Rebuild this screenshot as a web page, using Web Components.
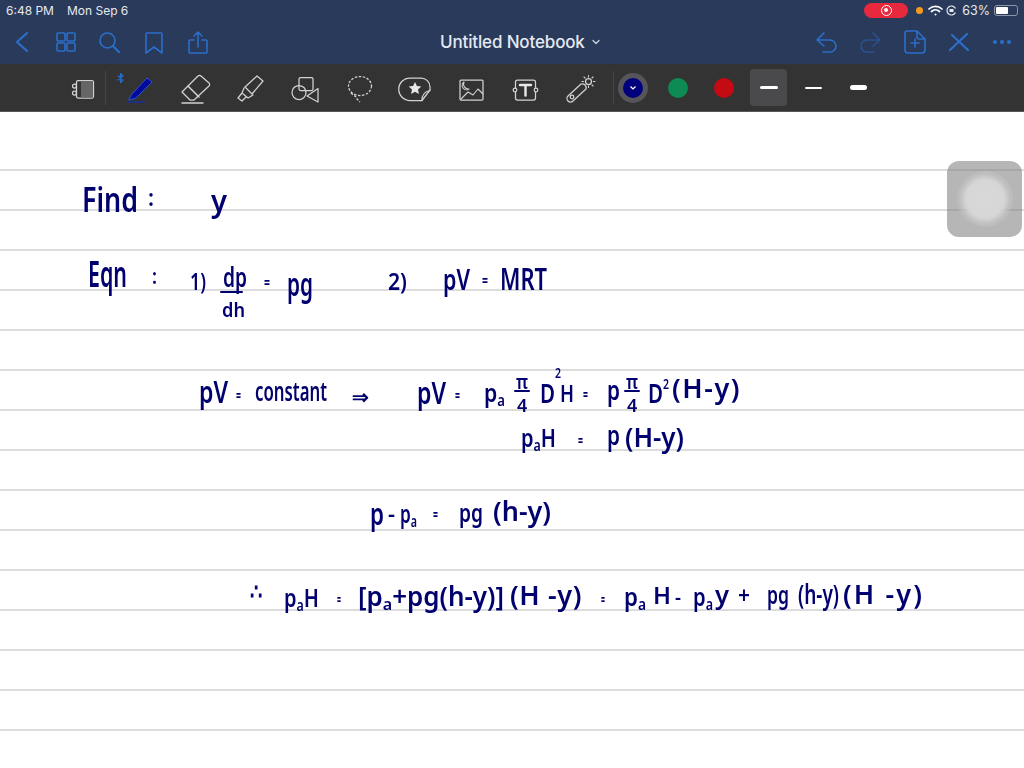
<!DOCTYPE html>
<html>
<head>
<meta charset="utf-8">
<title>Untitled Notebook</title>
<style>
  html, body { margin: 0; height: 100%; }
  body { width: 1024px; height: 768px; overflow: hidden; display: flex; flex-direction: column; font-family: Inter, "Noto Sans", sans-serif; }
</style>
</head>
<body>
<status-bar></status-bar>
<nav-bar></nav-bar>
<tool-bar></tool-bar>
<note-paper>
  <ink-text x="82" y="212" w="56" s="34">Find</ink-text>
  <ink-text x="148" y="206" w="6" s="24">:</ink-text>
  <ink-text x="211" y="212" w="16" s="30">y</ink-text>

  <ink-text x="88" y="287" w="39" s="36">Eqn</ink-text>
  <ink-text x="152" y="284" w="5" s="22">:</ink-text>
  <ink-text x="190" y="290" w="16" s="24">1)</ink-text>
  <ink-text x="223" y="287" w="24" s="27">dp</ink-text>
  <ink-bar x="220" y="291" w="23"></ink-bar>
  <ink-text x="222" y="317" w="23" s="20">dh</ink-text>
  <ink-text x="264" y="289" w="6" s="17">=</ink-text>
  <ink-text x="287" y="296" w="26" s="32">pg</ink-text>
  <ink-text x="388" y="290" w="19" s="24">2)</ink-text>
  <ink-text x="443" y="290" w="27" s="28">pV</ink-text>
  <ink-text x="482" y="287" w="6" s="17">=</ink-text>
  <ink-text x="500" y="290" w="47" s="30">MRT</ink-text>

  <ink-text x="199" y="403" w="29" s="30">pV</ink-text>
  <ink-text x="236" y="402" w="5" s="17">=</ink-text>
  <ink-text x="255" y="401" w="72" s="27">constant</ink-text>
  <ink-text x="352" y="404" w="21" s="20">⇒</ink-text>
  <ink-text x="417" y="404" w="29" s="30">pV</ink-text>
  <ink-text x="455" y="402" w="5" s="17">=</ink-text>
  <ink-text x="484" y="402" w="21" s="25">p<sub>a</sub></ink-text>
  <ink-text x="516" y="389" w="12" s="20">π</ink-text>
  <ink-bar x="514" y="390" w="16"></ink-bar>
  <ink-text x="517" y="412" w="11" s="18">4</ink-text>
  <ink-text x="540" y="403" w="15" s="27">D</ink-text>
  <ink-text x="555" y="378" w="6" s="15">2</ink-text>
  <ink-text x="560" y="402" w="14" s="24">H</ink-text>
  <ink-text x="583" y="401" w="5" s="17">=</ink-text>
  <ink-text x="607" y="400" w="13" s="27">p</ink-text>
  <ink-text x="626" y="389" w="12" s="20">π</ink-text>
  <ink-bar x="624" y="390" w="16"></ink-bar>
  <ink-text x="627" y="412" w="11" s="18">4</ink-text>
  <ink-text x="648" y="403" w="15" s="27">D</ink-text>
  <ink-text x="663" y="389" w="6" s="15">2</ink-text>
  <ink-text x="672" y="398" w="69" s="27">(H-y)</ink-text>

  <ink-text x="521" y="447" w="35" s="26">p<sub>a</sub>H</ink-text>
  <ink-text x="578" y="447" w="5" s="17">=</ink-text>
  <ink-text x="607" y="445" w="13" s="27">p</ink-text>
  <ink-text x="625" y="447" w="59" s="27">(H-y)</ink-text>

  <ink-text x="370" y="525" w="14" s="30">p</ink-text>
  <ink-text x="388" y="522" w="7" s="22">-</ink-text>
  <ink-text x="400" y="523" w="17" s="26">p<sub>a</sub></ink-text>
  <ink-text x="433" y="521" w="5" s="17">=</ink-text>
  <ink-text x="459" y="522" w="24" s="26">pg</ink-text>
  <ink-text x="493" y="521" w="58" s="27">(h-y)</ink-text>

  <ink-text x="250" y="599" w="12" s="21">∴</ink-text>
  <ink-text x="284" y="607" w="35" s="26">p<sub>a</sub>H</ink-text>
  <ink-text x="337" y="606" w="4" s="17">=</ink-text>
  <ink-text x="358" y="606" w="146" s="27">[p<sub>a</sub>+pg(h-y)]</ink-text>
  <ink-text x="510" y="605" w="72" s="27">(H -y)</ink-text>
  <ink-text x="601" y="606" w="4" s="17">=</ink-text>
  <ink-text x="624" y="606" w="22" s="26">p<sub>a</sub></ink-text>
  <ink-text x="653" y="604" w="18" s="24">H</ink-text>
  <ink-text x="675" y="604" w="6" s="20">-</ink-text>
  <ink-text x="693" y="606" w="20" s="26">p<sub>a</sub></ink-text>
  <ink-text x="715" y="604" w="14" s="26">y</ink-text>
  <ink-text x="738" y="604" w="12" s="24">+</ink-text>
  <ink-text x="767" y="604" w="22" s="26">pg</ink-text>
  <ink-text x="798" y="604" w="41" s="27">(h-y)</ink-text>
  <ink-text x="843" y="604" w="81" s="27">(H -y)</ink-text>

  <float-button></float-button>
</note-paper>

<script>
const ICONS = {
  back: '<path d="M13 6 3 15l10 9" stroke-width="2.2"/>',
  grid: '<rect x="6" y="6" width="8" height="8" rx="1"/><rect x="16" y="6" width="8" height="8" rx="1"/><rect x="6" y="16" width="8" height="8" rx="1"/><rect x="16" y="16" width="8" height="8" rx="1"/>',
  search: '<circle cx="12.500" cy="13.500" r="7.500"/><path d="m18 19 6 6" stroke-width="2.2"/>',
  bookmark: '<path d="M8 6h14a1 1 0 0 1 1 1v19l-8-6-8 6V7a1 1 0 0 1 1-1z"/>',
  share: '<path d="M11 13H7a1 1 0 0 0-1 1v11a1 1 0 0 0 1 1h16a1 1 0 0 0 1-1V14a1 1 0 0 0-1-1h-4M15 20V5M11 9l4-4 4 4"/>',
  undo: '<path d="M6 13h13a6 6 0 0 1 0 12h-7M13 6l-7 7 7 6"/>',
  redo: '<path d="M25 13H12a6 6 0 0 0 0 12h7M18 6l7 7-7 6"/>',
  addpage: '<path d="M8 4h10l8 8v11a3 3 0 0 1-3 3H9a3 3 0 0 1-3-3V6a2 2 0 0 1 2-2zM18 4v6a2 2 0 0 0 2 2h6M16 12v8M12 16h8"/>',
  cross: '<path d="M7 23 24 7M9 8l16 15" stroke-width="2.200"/>',
  notebook: '<rect x="8.500" y="7.500" width="17" height="17.500" rx="1.500"/><path d="M13 8h12v16.500H13z" fill="#666" stroke="none"/><circle cx="6.500" cy="13" r="2"/><circle cx="6.500" cy="20" r="2"/>',
  pen: '<path d="M7 21 22 5l5 4-16 16-7 2z" fill="#000a9a" stroke="#2b55c8" stroke-width="1"/><path d="M3 29h16" stroke="#1a2fa0" stroke-width="1.500"/><path d="m-7 3 5 4-2.500 2.500V.5L-2 3l-5 4" stroke="#2a6fc9" stroke-width="1.200"/>',
  eraser: '<path d="M2 19 18 3a2 2 0 0 1 3 0l8 7a2 2 0 0 1 0 3L14 27h-4z"/><path d="m8 13 11 11M2 30h21" stroke-width="1.500"/>',
  highlighter: '<path d="m10 14 12-11 6 5-11 13zM9 15l-2 5 6 5 5-3M7 20l-4 5 4 3 4-4"/>',
  shapes: '<rect x="9" y="4.500" width="14" height="13" rx="1.500"/><circle cx="9" cy="19.500" r="7"/><path d="m28 15.500-11 7.500 11 6z"/>',
  lasso: '<g stroke-linecap="butt" stroke-dasharray="2.500 1.500"><ellipse cx="15" cy="13" rx="11.500" ry="9.500"/><path d="M6 20c2 3 6 3 6 6l3 3"/></g>',
  sticker: '<path d="M10 5h11a9 9 0 0 1 9 9v3l-8 10.500H10a11 11 0 0 1 0-22.500z"/><path d="M22 27.500c0-5 2-9 8-10"/><path d="m15 9 1.900 4.100 4.400.5-3.300 3 .9 4.400-3.900-2.200-3.900 2.200.9-4.400-3.300-3 4.400-.5z" fill="#e8e8e8" stroke="none"/>',
  image: '<rect x="5" y="7" width="23" height="20" rx="1"/><path d="m6 26 7-7 5 3 5-6 5 5M9 9a5 5 0 0 0 5 7 4 4 0 0 1-5-7z" stroke-width="1.100"/>',
  text: '<rect x="5.500" y="7" width="20" height="20" rx="2"/><circle cx="5" cy="17" r="1.800" fill="#333"/><circle cx="26" cy="17" r="1.800" fill="#333"/><path d="M10 12h11M15.500 12v10.500" stroke="#e8e8e8" stroke-width="2.400"/>',
  laser: '<path d="m3 23 13-12a4 4 0 0 1 5 5L8 28a3.500 3.500 0 0 1-5-5z"/><circle cx="7" cy="24" r="1.800"/><circle cx="23.500" cy="8.500" r="3"/><path d="M23.500 2.500v1.500M23.500 13v1.500M17 8.500h1.500M28.500 8.500h1.500M19 4l1 1M28 4l-1 1M28 13l-1-1" stroke-width="1.100"/>'
};

class UiIcon extends HTMLElement {
  connectedCallback() {
    const name = this.getAttribute('name');
    const dim = this.getAttribute('dim') || '1';
    this.attachShadow({ mode: 'open' }).innerHTML = `
      <style>
        :host { display: block; width: 30px; height: 30px; opacity: ${dim}; }
        svg { display: block; overflow: visible; fill: none; stroke: currentColor; stroke-width: var(--icon-stroke, 1.6); stroke-linecap: round; stroke-linejoin: round; }
      </style>
      <svg width="30" height="30" viewBox="0 0 30 30">${ICONS[name]}</svg>`;
  }
}
customElements.define('ui-icon', UiIcon);

class StatusBar extends HTMLElement {
  constructor() {
    super();
    this.attachShadow({ mode: 'open' }).innerHTML = `
      <style>
        :host { display: flex; align-items: center; height: 20px; padding: 0 6px; flex: none; background: #2a3a5b; color: #e6e9ef; font: 12px Inter, sans-serif; }
        .date { margin-left: 13px; }
        .right { margin-left: auto; display: flex; align-items: center; }
        .rec { width: 44px; height: 15px; border-radius: 8px; background: #e8283c; display: flex; align-items: center; justify-content: center; }
        .rec i { width: 11px; height: 11px; border: 1.500px solid #fff; border-radius: 50%; box-sizing: border-box; display: flex; align-items: center; justify-content: center; }
        .rec i::after { content: ""; width: 4px; height: 4px; border-radius: 50%; background: #fff; }
        .dot { width: 7px; height: 7px; border-radius: 50%; background: #f59a1c; margin-left: 8px; }
        svg { display: block; }
        .wifi { margin-left: 5px; }
        .lock { margin-left: 3px; }
        .pct { margin-left: 5px; font-size: 12.500px; }
        .batt { margin-left: 4px; width: 24px; height: 11px; border: 1px solid #8d96a8; border-radius: 3px; padding: 1px; box-sizing: border-box; }
        .batt i { display: block; width: 62%; height: 100%; background: #fff; border-radius: 1px; }
      </style>
      <span>6:48 PM</span><span class="date">Mon Sep 6</span>
      <div class="right">
        <div class="rec"><i></i></div>
        <div class="dot"></div>
        <svg class="wifi" width="15" height="11" viewBox="0 0 15 11" fill="none" stroke="#fff" stroke-width="1.700" stroke-linecap="round"><path d="M1 4a9.500 9.500 0 0 1 13 0M3.500 6.500a6 6 0 0 1 8 0"/><circle cx="7.500" cy="9.500" r="1" fill="#fff" stroke="none"/></svg>
        <svg class="lock" width="11" height="11" viewBox="0 0 11 11" fill="none" stroke="#e6e9ef" stroke-width="1.200"><path d="M9.500 7.500A4.500 4.500 0 1 1 9.500 3.500"/><rect x="3.500" y="4" width="4" height="3" fill="#e6e9ef" stroke="none"/></svg>
        <span class="pct">63%</span>
        <div class="batt"><i></i></div>
      </div>`;
  }
}
customElements.define('status-bar', StatusBar);

class NavBar extends HTMLElement {
  constructor() {
    super();
    this.attachShadow({ mode: 'open' }).innerHTML = `
      <style>
        :host { display: flex; align-items: center; height: 44px; flex: none; background: #2a3a5b; color: #2b6fca; }
        .left, .right { display: flex; gap: 14px; }
        .left { margin-left: 14px; }
        .left ui-icon:nth-child(2) { margin-left: -7px; }
        .right { margin-left: auto; margin-right: 7px; }
        .title { flex: none; margin-left: 227px; color: #e4e9f2; font: 500 17px Inter, sans-serif; letter-spacing: -.15px; display: flex; align-items: center; gap: 7px; }
        .title svg { display: block; }
        .dots { display: flex; gap: 3px; width: 30px; align-items: center; justify-content: center; }
        .dots i { width: 4px; height: 4px; border-radius: 50%; background: currentColor; }
      </style>
      <div class="left">
        <ui-icon name="back"></ui-icon><ui-icon name="grid"></ui-icon><ui-icon name="search"></ui-icon><ui-icon name="bookmark"></ui-icon><ui-icon name="share"></ui-icon>
      </div>
      <div class="title">Untitled Notebook
        <svg width="8" height="6" viewBox="0 0 8 6" fill="none" stroke="#c9d2e2" stroke-width="1.300" stroke-linecap="round" stroke-linejoin="round"><path d="m1 1.500 3 3 3-3"/></svg>
      </div>
      <div class="right">
        <ui-icon name="undo"></ui-icon><ui-icon name="redo" dim=".45"></ui-icon><ui-icon name="addpage"></ui-icon><ui-icon name="cross"></ui-icon><div class="dots"><i></i><i></i><i></i></div>
      </div>`;
  }
}
customElements.define('nav-bar', NavBar);

class ToolBar extends HTMLElement {
  constructor() {
    super();
    this.attachShadow({ mode: 'open' }).innerHTML = `
      <style>
        :host { display: flex; align-items: center; height: 47px; flex: none; padding-left: 68px; background: #333333; color: #d2d2d2; border-bottom: 1px solid #55575a; --icon-stroke: 1.25; }
        .tools { display: flex; gap: 25px; }
        .sep { width: 1px; height: 34px; background: #454545; flex: none; }
        .sep.a { margin: 0 19px 0 7px; }
        .sep.b { margin: 0 4px 0 18px; }
        .color { width: 30px; height: 30px; border-radius: 50%; display: flex; align-items: center; justify-content: center; flex: none; }
        .color i { display: flex; align-items: center; justify-content: center; width: 20px; height: 20px; border-radius: 50%; }
        .sel { background: #55555a; }
        .sel svg { display: block; }
        .size { width: 37px; height: 37px; border-radius: 4px; display: flex; align-items: center; justify-content: center; flex: none; margin-right: 8px; }
        .size.on { background: #4a4a4d; margin-left: 11px; }
        .size i { display: block; background: #fff; border-radius: 3px; }
      </style>
      <ui-icon name="notebook"></ui-icon>
      <div class="sep a"></div>
      <div class="tools">
        <ui-icon name="pen"></ui-icon><ui-icon name="eraser"></ui-icon><ui-icon name="highlighter"></ui-icon><ui-icon name="shapes"></ui-icon><ui-icon name="lasso"></ui-icon><ui-icon name="sticker"></ui-icon><ui-icon name="image"></ui-icon><ui-icon name="text"></ui-icon><ui-icon name="laser"></ui-icon>
      </div>
      <div class="sep b"></div>
      <div class="color sel"><i style="background:#00007f"><svg width="8" height="6" viewBox="0 0 8 6" fill="none" stroke="#fff" stroke-width="1.200"><path d="m1.500 1.500 2.500 2.500 2.500-2.500"/></svg></i></div>
      <div class="color" style="margin-left:15px"><i style="background:#0e8a55"></i></div>
      <div class="color" style="margin-left:16px"><i style="background:#c40a12"></i></div>
      <div class="size on"><i style="width:18px;height:3px"></i></div>
      <div class="size"><i style="width:17px;height:2px"></i></div>
      <div class="size"><i style="width:17px;height:5px"></i></div>`;
  }
}
customElements.define('tool-bar', ToolBar);

class NotePaper extends HTMLElement {
  constructor() {
    super();
    this.attachShadow({ mode: 'open' }).innerHTML = `
      <style>
        :host { display: block; flex: 1; position: relative; overflow: hidden; background-color: #fff;
          background-image: repeating-linear-gradient(to bottom, #dcdcdc 0, #dcdcdc 2px, transparent 2px, transparent 40px);
          background-position: 0 57px; background-repeat: no-repeat; background-size: 100% 640px; }
      </style>
      <slot></slot>`;
  }
}
customElements.define('note-paper', NotePaper);

// handwriting: place on the page is the content, x / y (baseline) are screen coords
const PAPER_TOP = 112;

class InkText extends HTMLElement {
  constructor() {
    super();
    this.attachShadow({ mode: 'open' }).innerHTML = `
      <style>
        :host { position: absolute; display: block; white-space: nowrap; color: #00006e; font-family: "Noto Sans", sans-serif; font-weight: 600; line-height: normal; transform-origin: 0 0; filter: blur(.25px); }
        ::slotted(sub) { font-size: .62em; vertical-align: -.25em; line-height: 0; }
      </style>
      <slot></slot>`;
  }
  connectedCallback() {
    const size = +this.getAttribute('s');
    this.style.fontSize = size + 'px';
    this.style.left = this.getAttribute('x') + 'px';
    // Noto Sans ascent is 1.069em
    this.style.top = (this.getAttribute('y') - PAPER_TOP - size * 1.069) + 'px';
    const want = +this.getAttribute('w');
    const have = this.getBoundingClientRect().width;
    // squeeze narrow writing, space out the wide writing
    if (want < have) this.style.transform = `scaleX(${want / have})`;
    else this.style.letterSpacing = (want - have) / this.textContent.length + 'px';
  }
}
customElements.define('ink-text', InkText);

class InkBar extends HTMLElement {
  constructor() {
    super();
    this.attachShadow({ mode: 'open' }).innerHTML = `
      <style>:host { position: absolute; display: block; height: 2px; border-radius: 1px; background: #00006e; }</style>`;
  }
  connectedCallback() {
    this.style.left = this.getAttribute('x') + 'px';
    this.style.top = (this.getAttribute('y') - PAPER_TOP) + 'px';
    this.style.width = this.getAttribute('w') + 'px';
  }
}
customElements.define('ink-bar', InkBar);

class FloatButton extends HTMLElement {
  constructor() {
    super();
    this.attachShadow({ mode: 'open' }).innerHTML = `
      <style>
        :host { position: absolute; left: 947px; top: 49px; width: 75px; height: 76px; border-radius: 12px; background: rgba(130,130,130,.58); display: flex; align-items: center; justify-content: center; }
        .halo { width: 56px; height: 56px; border-radius: 50%; background: radial-gradient(circle, #d9d9d9 0, #d6d6d6 48%, rgba(200,200,200,.45) 64%, rgba(190,190,190,0) 100%); }
      </style>
      <div class="halo"></div>`;
  }
}
customElements.define('float-button', FloatButton);
</script>
</body>
</html>
